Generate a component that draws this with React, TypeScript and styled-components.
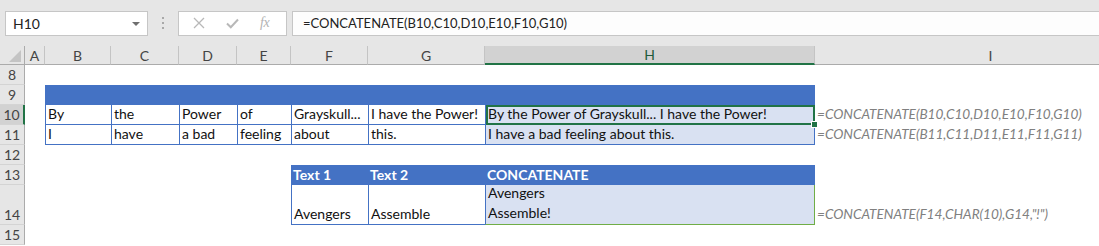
import React from "react"
import styled, { createGlobalStyle, css } from "styled-components"

const GlobalStyle = createGlobalStyle`
  html, body {
    margin: 0;
    padding: 0;
    background: #fff;
    overflow: hidden;
  }
  body {
    font-family: Lato, "Open Sans", sans-serif;
  }
`

const BLUE = "#4472c4"
const LIGHT = "#d9e1f2"
const GREEN = "#217346"
const GRID_BORDER = "#ababab"

const Window = styled.div`
  width: 1099px;
  height: 246px;
  overflow: hidden;
`

const FormulaBar = styled.div`
  height: 46px;
  background: #e6e6e6;
  display: flex;
  align-items: center;
  padding-left: 5px;
  box-sizing: border-box;
`

const NameBox = styled.div`
  width: 143px;
  height: 25px;
  box-sizing: border-box;
  border: 1px solid #c6c6c6;
  background: #fff;
  display: flex;
  align-items: center;
  justify-content: space-between;
  padding: 0 7px 0 7px;
  font-size: 14px;
  color: #222;
`

const DropArrow = styled.span`
  width: 0;
  height: 0;
  border-left: 4px solid transparent;
  border-right: 4px solid transparent;
  border-top: 4px solid #6f6f6f;
  margin-top: 1px;
`

const Grip = styled.div`
  width: 2px;
  margin: 0 14px;
  display: flex;
  flex-direction: column;
  gap: 3px;
  span {
    width: 2px;
    height: 2px;
    background: #a8a8a8;
  }
`

const FxBox = styled.div`
  width: 109px;
  height: 25px;
  box-sizing: border-box;
  border: 1px solid #c6c6c6;
  background: #fff;
  display: flex;
  align-items: center;
  padding-left: 14px;
  gap: 21px;
`

const FxText = styled.span`
  font-family: "Liberation Serif", serif;
  font-style: italic;
  font-size: 14px;
  color: #b3b3b3;
  letter-spacing: -0.5px;
`

const FormulaInput = styled.div`
  flex: 1;
  height: 25px;
  box-sizing: border-box;
  margin-left: 5px;
  border-top: 1px solid #c6c6c6;
  border-bottom: 1px solid #c6c6c6;
  border-left: 1px solid #c6c6c6;
  background: #fdfdfd;
  display: flex;
  align-items: center;
  padding-left: 10px;
  font-size: 13px;
  color: #222;
`

const Sheet = styled.div`
  display: grid;
  grid-template-columns: 25px 20px 66px 68px 58px 54px 77px 117px 330px 352px;
  grid-template-rows: 19px 20px 20px 20px 20px 20px 20px 40px 20px;
  font-size: 14px;
`

const HeaderCell = styled.div<{ $active?: boolean }>`
  background: ${(p) => (p.$active ? "#d2d2d2" : "#e6e6e6")};
  border-right: 1px solid #c4c4c4;
  border-bottom: ${(p) => (p.$active ? `2px solid ${GREEN}` : `1px solid ${GRID_BORDER}`)};
  box-sizing: border-box;
  display: flex;
  align-items: center;
  justify-content: center;
  font-size: 14px;
  color: ${(p) => (p.$active ? "#1f5c3a" : "#444")};
`

const Corner = styled.div`
  background: #e6e6e6;
  border-right: 1px solid ${GRID_BORDER};
  border-bottom: 1px solid ${GRID_BORDER};
  box-sizing: border-box;
  display: flex;
  align-items: flex-end;
  justify-content: flex-end;
  padding: 0 3px 2px 0;
`

const RowHeader = styled.div<{ $active?: boolean }>`
  background: ${(p) => (p.$active ? "#d2d2d2" : "#e6e6e6")};
  border-right: ${(p) => (p.$active ? `2px solid ${GREEN}` : `1px solid ${GRID_BORDER}`)};
  border-bottom: 1px solid #d4d4d4;
  box-sizing: border-box;
  display: flex;
  align-items: flex-end;
  justify-content: center;
  padding-bottom: 1px;
  font-size: 14px;
  color: #444;
`

type CellSpec = {
  text?: string
  span?: number
  fill?: string
  left?: string
  right?: string
  bottom?: string
  head?: boolean
  formula?: boolean
  selected?: boolean
}

const Cell = styled.div<{
  $fill?: string
  $left?: string
  $right?: string
  $bottom?: string
  $head?: boolean
  $formula?: boolean
  $selected?: boolean
}>`
  position: relative;
  box-sizing: border-box;
  background: ${(p) => p.$fill || "transparent"};
  border-left: ${(p) => (p.$left ? `1px solid ${p.$left}` : "none")};
  border-right: ${(p) => (p.$right ? `1px solid ${p.$right}` : "none")};
  border-bottom: ${(p) => (p.$bottom ? `1px solid ${p.$bottom}` : "none")};
  display: flex;
  align-items: flex-end;
  padding: 0 2px 1px 2px;
  white-space: pre;
  line-height: 19px;
  color: #111;
  ${(p) =>
    p.$head &&
    css`
      color: #fff;
      font-weight: 700;
    `}
  ${(p) =>
    p.$formula &&
    css`
      color: #808080;
      font-style: italic;
      font-size: 13.6px;
      padding-left: 2px;
    `}
  ${(p) =>
    p.$selected &&
    css`
      &::after {
        content: "";
        position: absolute;
        left: 0;
        top: 0;
        right: -1px;
        bottom: -1px;
        border: 2px solid ${GREEN};
        pointer-events: none;
      }
      &::before {
        content: "";
        position: absolute;
        right: -4px;
        bottom: -4px;
        width: 5px;
        height: 5px;
        background: ${GREEN};
        border: 1px solid #fff;
        z-index: 2;
      }
    `}
`

const Wrapped = styled.span`
  white-space: pre-line;
  line-height: 20px;
`

const COLUMNS = ["A", "B", "C", "D", "E", "F", "G", "H", "I"]

const tb = (text: string, extra: Partial<CellSpec> = {}): CellSpec => ({
  text,
  left: BLUE,
  bottom: BLUE,
  ...extra,
})

const rows: { n: number; cells: CellSpec[] }[] = [
  { n: 8, cells: Array(9).fill({}) },
  { n: 9, cells: [{}, { span: 7, fill: BLUE }, {}] },
  {
    n: 10,
    cells: [
      {},
      tb("By"),
      tb("the"),
      tb("Power"),
      tb("of"),
      tb("Grayskull..."),
      tb("I have the Power!"),
      tb("By the Power of Grayskull... I have the Power!", { fill: LIGHT, right: BLUE, selected: true }),
      { text: "=CONCATENATE(B10,C10,D10,E10,F10,G10)", formula: true },
    ],
  },
  {
    n: 11,
    cells: [
      {},
      tb("I"),
      tb("have"),
      tb("a bad"),
      tb("feeling"),
      tb("about"),
      tb("this."),
      tb("I have a bad feeling about this.", { fill: LIGHT, right: BLUE }),
      { text: "=CONCATENATE(B11,C11,D11,E11,F11,G11)", formula: true },
    ],
  },
  { n: 12, cells: Array(9).fill({}) },
  {
    n: 13,
    cells: [
      {}, {}, {}, {}, {},
      { text: "Text 1", fill: BLUE, head: true },
      { text: "Text 2", fill: BLUE, head: true },
      { text: "CONCATENATE", fill: BLUE, head: true },
      {},
    ],
  },
  {
    n: 14,
    cells: [
      {}, {}, {}, {}, {},
      tb("Avengers"),
      tb("Assemble"),
      { text: "Avengers\nAssemble!", fill: LIGHT, left: BLUE, right: "#70ad47", bottom: "#70ad47" },
      { text: '=CONCATENATE(F14,CHAR(10),G14,"!")', formula: true },
    ],
  },
  { n: 15, cells: Array(9).fill({}) },
]

function CancelIcon() {
  return (
    <svg width="12" height="12" viewBox="0 0 12 12">
      <path d="M1 1 L11 11 M11 1 L1 11" stroke="#b8b8b8" strokeWidth="1.3" fill="none" />
    </svg>
  )
}

function CheckIcon() {
  return (
    <svg width="13" height="11" viewBox="0 0 13 11">
      <path d="M1 5.5 L4.8 9.2 L12 1.5" stroke="#b8b8b8" strokeWidth="2" fill="none" />
    </svg>
  )
}

function SelectAllTriangle() {
  return (
    <svg width="12" height="12" viewBox="0 0 12 12">
      <polygon points="12,0 12,12 0,12" fill="#c4c4c4" />
    </svg>
  )
}

export default function App() {
  return (
    <Window>
      <GlobalStyle />
      <FormulaBar>
        <NameBox>
          H10
          <DropArrow />
        </NameBox>
        <Grip>
          <span />
          <span />
          <span />
        </Grip>
        <FxBox>
          <CancelIcon />
          <CheckIcon />
          <FxText>fx</FxText>
        </FxBox>
        <FormulaInput>=CONCATENATE(B10,C10,D10,E10,F10,G10)</FormulaInput>
      </FormulaBar>

      <Sheet>
        <Corner>
          <SelectAllTriangle />
        </Corner>
        {COLUMNS.map((c) => (
          <HeaderCell key={c} $active={c === "H"}>
            {c}
          </HeaderCell>
        ))}

        {rows.map((row) => (
          <React.Fragment key={row.n}>
            <RowHeader $active={row.n === 10}>{row.n}</RowHeader>
            {row.cells.map((cell, i) => (
              <Cell
                key={i}
                style={cell.span ? { gridColumn: `span ${cell.span}` } : undefined}
                $fill={cell.fill}
                $left={cell.left}
                $right={cell.right}
                $bottom={cell.bottom}
                $head={cell.head}
                $formula={cell.formula}
                $selected={cell.selected}
              >
                {cell.text && cell.text.includes("\n") ? <Wrapped>{cell.text}</Wrapped> : cell.text}
              </Cell>
            ))}
          </React.Fragment>
        ))}
      </Sheet>
    </Window>
  )
}
